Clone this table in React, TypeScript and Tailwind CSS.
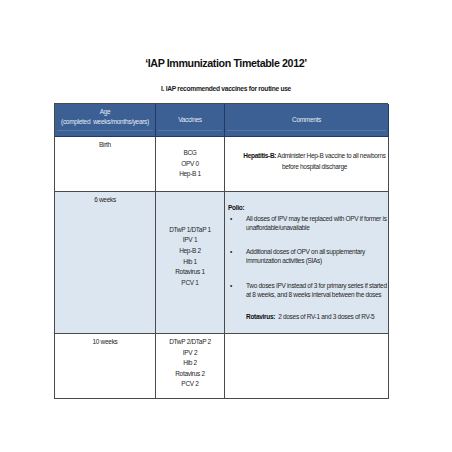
const font = {
  fontFamily: '"Liberation Sans", Arial, sans-serif',
};

function Cell({
  children,
  className = "",
}: {
  children?: React.ReactNode;
  className?: string;
}) {
  return <div className={`border-r border-b border-[#4a4a4a] ${className}`}>{children}</div>;
}

function HeadCell({ children }: { children?: React.ReactNode }) {
  return (
    <div className="h-[33px] bg-[#3c6094] text-[#e3eaf5] border-r border-b border-[#223a63] flex flex-col">
      <div className="flex-1 flex flex-col items-center justify-center leading-[10px]">{children}</div>
      <div className="h-px mb-[5px] mx-[2px] bg-[#5577a8]" />
    </div>
  );
}

function Vaccines({ items }: { items: string[] }) {
  return (
    <div className="flex flex-col items-center leading-[10.6px]">
      {items.map((v) => (
        <span key={v}>{v}</span>
      ))}
    </div>
  );
}

function Bullet({ children }: { children: React.ReactNode }) {
  return (
    <li className="flex">
      <span className="w-[18px] shrink-0 pl-[2px]">•</span>
      <span className="whitespace-nowrap">{children}</span>
    </li>
  );
}

export default function App() {
  return (
    <div className="w-[452px] h-[452px] bg-white text-[#262626]" style={font}>
      <div className="pt-[54px] text-center">
        <h1 className="text-[10.7px] tracking-[-0.4px] font-bold text-[#111] leading-[18px]">
          ‘IAP Immunization Timetable 2012’
        </h1>
        <p className="mt-[12px] text-[6.7px] tracking-[-0.3px] font-bold text-[#1a1a1a] leading-[10px]">
          I. IAP recommended vaccines for routine use
        </p>
      </div>

      <div className="ml-[54px] mt-[9px] w-[334px] grid grid-cols-[101px_69px_164px] border-l border-t border-[#4a4a4a] text-[6.5px] tracking-[-0.3px]">
        {/* Header */}
        <HeadCell>
          <span>Age</span>
          <span>(completed&nbsp; weeks/months/years)</span>
        </HeadCell>
        <HeadCell>
          <span className="pt-[6px]">Vaccines</span>
        </HeadCell>
        <HeadCell>
          <span className="pt-[6px]">Comments</span>
        </HeadCell>

        {/* Birth */}
        <Cell className="h-[55px] text-center pt-[3px] leading-[10px]">Birth</Cell>
        <Cell className="h-[55px] flex items-center justify-center">
          <Vaccines items={["BCG", "OPV 0", "Hep-B 1"]} />
        </Cell>
        <Cell className="h-[55px] flex items-center justify-center pl-[18px] pr-[2px] pb-[5px] text-center leading-[10.5px]">
          <p className="whitespace-nowrap">
            <span className="font-bold text-[#111]">Hepatitis-B:</span> Administer Hep-B vaccine to all newborns
            <br />
            before hospital discharge
          </p>
        </Cell>

        {/* 6 weeks */}
        <Cell className="h-[142px] bg-[#dce6f1] text-center pt-[3px] leading-[10px]">6 weeks</Cell>
        <Cell className="h-[142px] bg-[#dce6f1] flex items-center justify-center pb-[12px]">
          <Vaccines items={["DTwP 1/DTaP 1", "IPV 1", "Hep-B 2", "Hib 1", "Rotavirus 1", "PCV 1"]} />
        </Cell>
        <Cell className="h-[142px] bg-[#dce6f1] pl-[3px] pr-[2px] pt-[12px] leading-[8.8px]">
          <p className="font-bold text-[#111]">Polio:</p>
          <ul className="mt-[2px] flex flex-col gap-[16px]">
            <Bullet>
              All doses of IPV may be replaced with OPV if former is
              <br />
              unaffordable/unavailable
            </Bullet>
            <Bullet>
              Additional doses of OPV on all supplementary
              <br />
              immunization activities (SIAs)
            </Bullet>
            <Bullet>
              Two doses IPV instead of 3 for primary series if started
              <br />
              at 8 weeks, and 8 weeks interval between the doses
            </Bullet>
          </ul>
          <p className="mt-[13px] pl-[18px] whitespace-nowrap">
            <span className="font-bold text-[#111]">Rotavirus:</span>&nbsp; 2 doses of RV-1 and 3 doses of RV-5
          </p>
        </Cell>

        {/* 10 weeks */}
        <Cell className="h-[65px] text-center pt-[3px] leading-[10px]">10 weeks</Cell>
        <Cell className="h-[65px] pt-[3px]">
          <Vaccines items={["DTwP 2/DTaP 2", "IPV 2", "Hib 2", "Rotavirus 2", "PCV 2"]} />
        </Cell>
        <Cell className="h-[65px]" />
      </div>
    </div>
  );
}
